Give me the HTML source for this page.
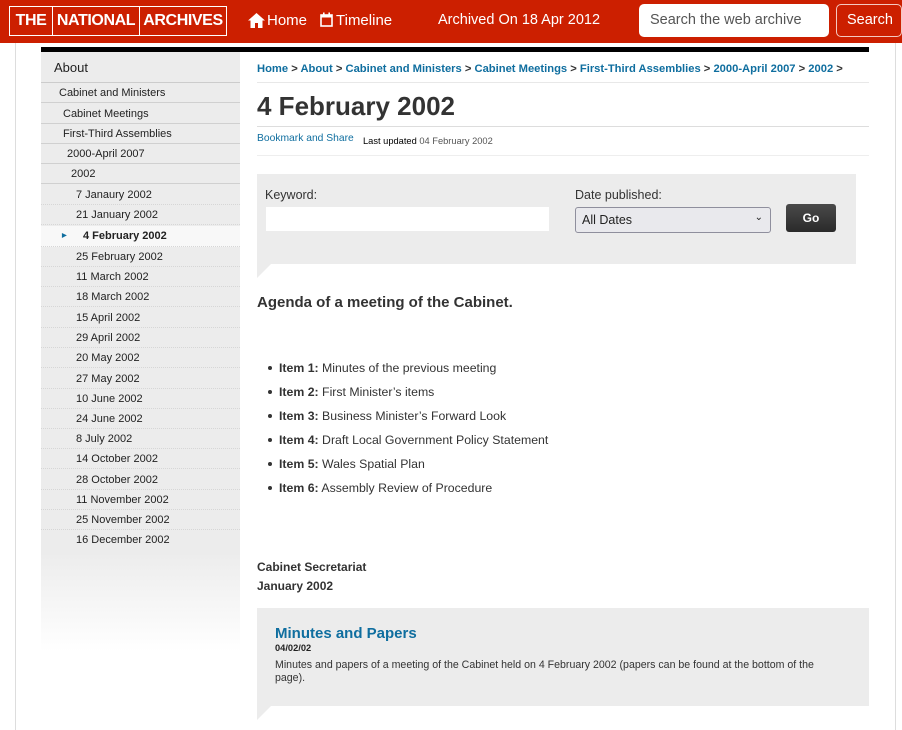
<!DOCTYPE html>
<html><head><meta charset="utf-8"><style>
*{margin:0;padding:0;box-sizing:border-box}
body{width:902px;height:730px;overflow:hidden;background:#fff;font-family:"Liberation Sans",Arial,sans-serif;color:#333;position:relative}
.a{position:absolute;white-space:nowrap}
#hdr{position:absolute;left:0;top:0;width:902px;height:43px;background:#cc1f00;color:#fff}
.logo{position:absolute;top:6px;height:30px;border:1px solid #fff;font-size:16px;letter-spacing:-0.4px;font-weight:bold;line-height:28px;text-align:center}
#side{position:absolute;left:41px;top:52px;width:199px;height:620px;background:linear-gradient(#ececec 0,#ececec 500px,#fff 600px)}
.r{position:absolute;left:0;width:199px;height:20px;border-bottom:1px dotted #d6d6d6;font-size:11px;line-height:20px;color:#222}
a{color:#0f6e9f;text-decoration:none}
ul{list-style:none}
li{position:relative;padding-left:12px}
li:before{content:"";position:absolute;left:1px;top:10px;width:4px;height:4px;border-radius:2px;background:#333}
</style></head><body>
<div style="position:absolute;left:15px;top:40px;width:1px;height:690px;background:#ddd"></div>
<div style="position:absolute;left:895px;top:40px;width:1px;height:690px;background:#ddd"></div>
<div id="hdr">
<div class="logo" style="left:9px;width:44px">THE</div>
<div class="logo" style="left:52px;width:88px">NATIONAL</div>
<div class="logo" style="left:139px;width:88px">ARCHIVES</div>
<svg class="a" style="left:248px;top:13px" width="17" height="15" viewBox="0 0 17 15"><path d="M8.5 0L0 7.5h2.5V15h4.5v-5h3v5h4.5V7.5H17z" fill="#fff"/></svg>
<div class="a" style="left:267px;top:12px;font-size:15px">Home</div>
<svg class="a" style="left:320px;top:12px" width="13" height="15" viewBox="0 0 13 15"><rect x="1" y="3" width="11" height="11" fill="none" stroke="#fff" stroke-width="1.6"/><rect x="1" y="3" width="11" height="2.5" fill="#fff"/><rect x="3" y="0.5" width="1.6" height="3" fill="#fff"/><rect x="8.4" y="0.5" width="1.6" height="3" fill="#fff"/></svg>
<div class="a" style="left:336px;top:12px;font-size:15px">Timeline</div>
<div class="a" style="left:438px;top:12px;font-size:14.5px">Archived On 18 Apr 2012</div>
<div class="a" style="left:639px;top:4px;width:190px;height:33px;background:#fff;border-radius:5px;color:#555;font-size:14.5px;line-height:33px;padding-left:11px">Search the web archive</div>
<div class="a" style="left:836px;top:4px;width:66px;height:33px;border:1px solid #f4c8c0;border-radius:5px;font-size:14.5px;line-height:31px;padding-left:10px">Search</div>
</div>
<div style="position:absolute;left:41px;top:47px;width:828px;height:5px;background:#000"></div>
<div id="side">
<div class="r" style="top:5px;height:26px;border-bottom:1px solid #ccc;font-size:13px;line-height:22px;padding-left:13px">About</div>
<div class="r" style="top:31px;border-bottom:1px solid #d0d0d0;padding-left:18px">Cabinet and Ministers</div>
<div class="r" style="top:52px;border-bottom:1px solid #d0d0d0;padding-left:22px">Cabinet Meetings</div>
<div class="r" style="top:72px;border-bottom:1px solid #d0d0d0;padding-left:22px">First-Third Assemblies</div>
<div class="r" style="top:92px;border-bottom:1px solid #d0d0d0;padding-left:26px">2000-April 2007</div>
<div class="r" style="top:112px;border-bottom:1px solid #d0d0d0;padding-left:30px">2002</div>
<div class="r" style="top:133px;padding-left:35px">7 Janaury 2002</div>
<div class="r" style="top:153px;padding-left:35px">21 January 2002</div>
<div class="r" style="top:174px;height:21px;background:#f8f8f8;padding-left:42px;font-weight:bold"><span style="position:absolute;left:21px;top:0;color:#0f6e9f;font-size:6px">▶</span>4 February 2002</div>
<div class="r" style="top:195px;padding-left:35px">25 February 2002</div>
<div class="r" style="top:215px;padding-left:35px">11 March 2002</div>
<div class="r" style="top:235px;padding-left:35px">18 March 2002</div>
<div class="r" style="top:256px;padding-left:35px">15 April 2002</div>
<div class="r" style="top:276px;padding-left:35px">29 April 2002</div>
<div class="r" style="top:296px;padding-left:35px">20 May 2002</div>
<div class="r" style="top:317px;padding-left:35px">27 May 2002</div>
<div class="r" style="top:337px;padding-left:35px">10 June 2002</div>
<div class="r" style="top:357px;padding-left:35px">24 June 2002</div>
<div class="r" style="top:377px;padding-left:35px">8 July 2002</div>
<div class="r" style="top:397px;padding-left:35px">14 October 2002</div>
<div class="r" style="top:418px;padding-left:35px">28 October 2002</div>
<div class="r" style="top:438px;padding-left:35px">11 November 2002</div>
<div class="r" style="top:458px;padding-left:35px">25 November 2002</div>
<div class="r" style="top:478px;padding-left:35px;border:none">16 December 2002</div>
</div>
<div class="a" style="left:257px;top:63px;font-size:11.2px;font-weight:bold;color:#333"><a href="#">Home</a> &gt; <a href="#">About</a> &gt; <a href="#">Cabinet and Ministers</a> &gt; <a href="#">Cabinet Meetings</a> &gt; <a href="#">First-Third Assemblies</a> &gt; <a href="#">2000-April 2007</a> &gt; <a href="#">2002</a> &gt;</div>
<div style="position:absolute;left:257px;top:82px;width:612px;height:1px;background:#e8e8e8"></div>
<div class="a" style="left:257px;top:91px;font-size:26px;font-weight:bold;color:#333">4 February 2002</div>
<div style="position:absolute;left:257px;top:126px;width:612px;height:1px;background:#ddd"></div>
<div class="a" style="left:257px;top:133px;font-size:10.3px"><a href="#">Bookmark and Share</a></div>
<div class="a" style="left:363px;top:136px;font-size:9.3px;color:#000">Last updated <span style="color:#555">04 February 2002</span></div>
<div style="position:absolute;left:257px;top:155px;width:612px;height:1px;background:#eee"></div>
<div style="position:absolute;left:257px;top:174px;width:599px;height:90px;background:#ececec"></div>
<svg class="a" style="left:257px;top:264px" width="14" height="14"><path d="M0 0H14L0 14z" fill="#ececec"/></svg>
<div class="a" style="left:265px;top:188px;font-size:12.5px">Keyword:</div>
<div class="a" style="left:266px;top:207px;width:283px;height:24px;background:#fff"></div>
<div class="a" style="left:575px;top:188px;font-size:12.5px">Date published:</div>
<div class="a" style="left:575px;top:207px;width:196px;height:26px;background:#e9e9ed;border:1px solid #8f8f9d;border-radius:3px;font-size:12.5px;line-height:24px;padding-left:6px;color:#222">All Dates<span style="position:absolute;right:7px;top:-2px;font-size:10px">⌄</span></div>
<div class="a" style="left:786px;top:204px;width:50px;height:28px;background:linear-gradient(#4a4a4a,#2a2a2a);border-radius:3px;color:#fff;font-size:12px;font-weight:bold;line-height:28px;text-align:center">Go</div>
<div class="a" style="left:257px;top:294px;font-size:15px;font-weight:bold;color:#333">Agenda of a meeting of the Cabinet.</div>
<ul class="a" style="left:267px;top:356px;font-size:12.3px;line-height:24px;color:#333">
<li><b>Item 1:</b> Minutes of the previous meeting</li>
<li><b>Item 2:</b> First Minister’s items</li>
<li><b>Item 3:</b> Business Minister’s Forward Look</li>
<li><b>Item 4:</b> Draft Local Government Policy Statement</li>
<li><b>Item 5:</b> Wales Spatial Plan</li>
<li><b>Item 6:</b> Assembly Review of Procedure</li>
</ul>
<div class="a" style="left:257px;top:558px;font-size:12px;font-weight:bold;line-height:19px">Cabinet Secretariat<br>January 2002</div>
<div style="position:absolute;left:257px;top:608px;width:612px;height:98px;background:#ececec"></div>
<svg class="a" style="left:257px;top:706px" width="14" height="14"><path d="M0 0H14L0 14z" fill="#ececec"/></svg>
<div class="a" style="left:275px;top:625px;font-size:15px;font-weight:bold;color:#0f6e9f">Minutes and Papers</div>
<div class="a" style="left:275px;top:643px;font-size:9.3px;font-weight:bold;color:#222">04/02/02</div>
<div class="a" style="left:275px;top:659px;font-size:10.6px;line-height:13px;color:#333;white-space:normal;width:565px">Minutes and papers of a meeting of the Cabinet held on 4 February 2002 (papers can be found at the bottom of the page).</div>
</body></html>
